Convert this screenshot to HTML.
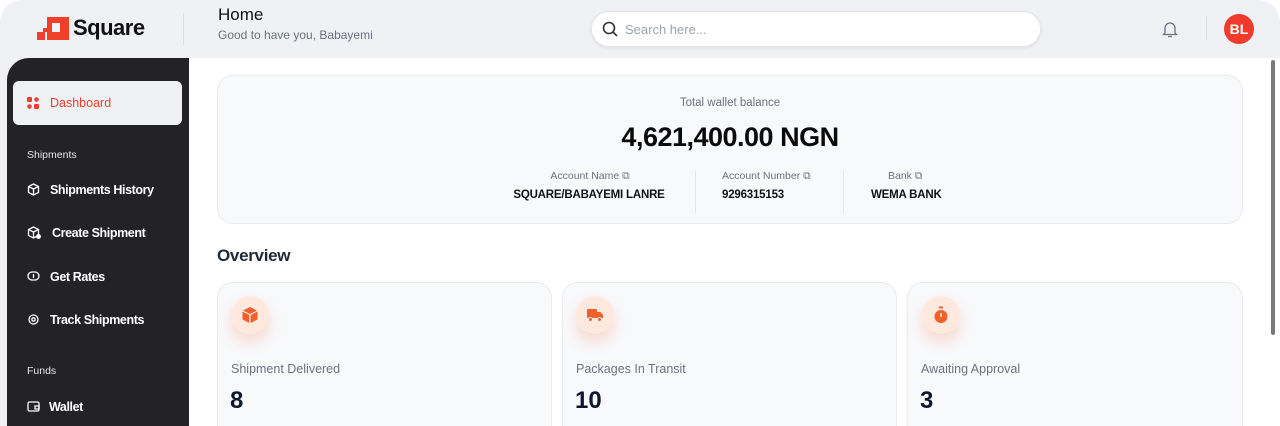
<!DOCTYPE html>
<html style="width:1280px;height:426px;overflow:hidden"><head><meta charset="utf-8"><style>
*{box-sizing:border-box;margin:0;padding:0}
body{width:1280px;height:426px;overflow:hidden;background:#fff;font-family:"Liberation Sans",sans-serif;position:relative}
.frame{position:absolute;inset:0;background:#f0f1f5;border-radius:22px 22px 0 0}
.abs{position:absolute}
.side{left:7px;top:58px;width:182px;height:368px;background:#232225;border-radius:22px 0 0 0}
.main{left:189px;top:58px;width:1079px;height:368px;background:#fff}
.sb{left:1268px;top:58px;width:12px;height:368px;background:#fff}
.sb i{position:absolute;left:3px;top:2px;width:4px;height:275px;background:#7a7a7a;border-radius:2px}
.nav{color:#fff;font-size:12.5px;font-weight:bold;letter-spacing:-.4px}
.sec{color:#e6e6e6;font-size:10.5px}
.card{background:#f8f9fb;border:1px solid #e8eaee;border-radius:16px}
.lbl{color:#6b7280;font-size:10.5px}
.val{color:#111;font-size:11.5px;font-weight:bold;letter-spacing:-.2px}
.ic{width:38px;height:38px;border-radius:50%;background:#ffe9df;box-shadow:0 8px 14px rgba(255,120,80,.25);display:flex;align-items:center;justify-content:center}
.st{color:#6b7280;font-size:12.5px}
.num{color:#0f172a;font-size:24px;font-weight:bold}
</style></head><body>
<div class="frame"></div>
<svg class="abs" style="left:37px;top:17px" width="32" height="23" viewBox="0 0 32 23"><rect x="10" y="0" width="22" height="23" fill="#f0402a"/><rect x="15" y="6" width="8" height="9" fill="#f0f1f5"/><rect x="0" y="15" width="8" height="8" fill="#f0402a"/><rect x="6" y="11" width="4" height="4" fill="#f0402a"/></svg>
<div class="abs" style="left:73px;top:15px;font-size:22px;font-weight:bold;color:#111;letter-spacing:-.5px">Square</div>
<div class="abs" style="left:183px;top:13px;width:1px;height:32px;background:#dcdee3"></div>
<div class="abs" style="left:218px;top:5px;font-size:17px;color:#111">Home</div>
<div class="abs" style="left:218px;top:28px;font-size:12px;color:#6b7280">Good to have you, Babayemi</div>
<div class="abs" style="left:591px;top:11px;width:450px;height:36px;background:#fff;border:1px solid #e2e4e8;border-radius:18px;box-shadow:0 1px 3px rgba(0,0,0,.08)"></div>
<svg class="abs" style="left:602px;top:21px" width="16" height="16" viewBox="0 0 16 16" fill="none" stroke="#333" stroke-width="1.6"><circle cx="7" cy="7" r="5.5"/><path d="M11 11l4 4"/></svg>
<div class="abs" style="left:625px;top:22px;font-size:13px;color:#9ca3af">Search here...</div>
<svg class="abs" style="left:1162px;top:20px" width="16" height="18" viewBox="0 0 16 18" fill="none" stroke="#6b7280" stroke-width="1.3"><path d="M3 13V8a5 5 0 0110 0v5l1.5 1.5h-13z"/><path d="M6 16.5h4"/></svg>
<div class="abs" style="left:1206px;top:16px;width:1px;height:24px;background:#dcdee3"></div>
<div class="abs" style="left:1224px;top:14px;width:30px;height:30px;border-radius:50%;background:#ef3b2c;color:#fff;font-weight:bold;font-size:14px;text-align:center;line-height:30px">BL</div>

<div class="abs side"></div>
<div class="abs main"></div>
<div class="abs sb"><i></i></div>

<div class="abs" style="left:13px;top:81px;width:169px;height:44px;background:#f0f1f5;border-radius:6px"></div>
<svg class="abs" style="left:27px;top:97px" width="12" height="12" viewBox="0 0 12 12" fill="#f0402a"><rect x="0" y="0" width="5" height="5" rx="1"/><circle cx="9.5" cy="2.5" r="2.3"/><circle cx="2.5" cy="9.5" r="2.3"/><rect x="7" y="7" width="5" height="5" rx="1"/></svg>
<div class="abs" style="left:50px;top:96px;font-size:12.5px;color:#f0402a">Dashboard</div>
<div class="abs sec" style="left:27px;top:149px">Shipments</div>
<svg class="abs" style="left:27px;top:183px" width="13" height="13" viewBox="0 0 13 13" fill="none" stroke="#fff" stroke-width="1.3"><path d="M6.5 1l5 2.5v6L6.5 12l-5-2.5v-6z M1.5 3.5l5 2.5 5-2.5 M6.5 6v6"/></svg>
<div class="abs nav" style="left:50px;top:183px">Shipments History</div>
<svg class="abs" style="left:27px;top:226px" width="14" height="13" viewBox="0 0 14 13" fill="none" stroke="#fff" stroke-width="1.3"><path d="M6.5 1l5 2.5v6L6.5 12l-5-2.5v-6z M1.5 3.5l5 2.5 5-2.5 M6.5 6v6"/><circle cx="11.5" cy="10.5" r="1.8" fill="#fff"/></svg>
<div class="abs nav" style="left:52px;top:226px">Create Shipment</div>
<svg class="abs" style="left:27px;top:271px" width="13" height="10" viewBox="0 0 13 10" fill="none" stroke="#fff" stroke-width="1.3"><rect x="1" y="1" width="11" height="8" rx="4"/><path d="M6.5 3v4"/></svg>
<div class="abs nav" style="left:50px;top:270px">Get Rates</div>
<svg class="abs" style="left:27px;top:313px" width="13" height="13" viewBox="0 0 13 13" fill="none" stroke="#fff" stroke-width="1.3"><circle cx="6.5" cy="6.5" r="4.5"/><circle cx="6.5" cy="6.5" r="1.7"/></svg>
<div class="abs nav" style="left:50px;top:313px">Track Shipments</div>
<div class="abs sec" style="left:27px;top:365px">Funds</div>
<svg class="abs" style="left:27px;top:401px" width="13" height="11" viewBox="0 0 13 11" fill="none" stroke="#fff" stroke-width="1.3"><rect x="1" y="1" width="11" height="9" rx="1.5"/><path d="M8 5h4v3H8z"/></svg>
<div class="abs nav" style="left:49px;top:400px">Wallet</div>

<div class="abs card" style="left:217px;top:75px;width:1026px;height:149px"></div>
<div class="abs" style="left:217px;top:97px;width:1026px;text-align:center;font-size:11.5px;color:#6b7280">Total wallet balance</div>
<div class="abs" style="left:217px;top:122px;width:1026px;text-align:center;font-size:27px;font-weight:bold;color:#0a0a0a;letter-spacing:-.5px">4,621,400.00 NGN</div>
<div class="abs lbl" style="left:505px;top:170px;width:170px;text-align:center">Account Name ⧉</div>
<div class="abs val" style="left:500px;top:189px;width:178px;text-align:center">SQUARE/BABAYEMI LANRE</div>
<div class="abs" style="left:695px;top:170px;width:1px;height:44px;background:#e5e7eb"></div>
<div class="abs lbl" style="left:722px;top:170px">Account Number ⧉</div>
<div class="abs val" style="left:722px;top:189px">9296315153</div>
<div class="abs" style="left:843px;top:170px;width:1px;height:44px;background:#e5e7eb"></div>
<div class="abs lbl" style="left:888px;top:170px">Bank ⧉</div>
<div class="abs val" style="left:871px;top:189px">WEMA BANK</div>

<div class="abs" style="left:217px;top:246px;font-size:17px;font-weight:bold;color:#1f2937;letter-spacing:-.3px">Overview</div>

<div class="abs card" style="left:217px;top:282px;width:335px;height:160px"></div>
<div class="abs card" style="left:562px;top:282px;width:335px;height:160px"></div>
<div class="abs card" style="left:907px;top:282px;width:336px;height:160px"></div>
<div class="abs ic" style="left:231px;top:296px"><svg width="18" height="18" viewBox="0 0 18 18" fill="#f0602a"><path d="M9 1l7 3.5-7 3.5-7-3.5z M1.5 5.5L8.3 9v8L1.5 13.5z M16.5 5.5L9.7 9v8l6.8-3.5z"/></svg></div>
<div class="abs ic" style="left:576px;top:296px"><svg width="18" height="16" viewBox="0 0 18 16" fill="#f0602a"><rect x="1" y="2" width="10" height="9" rx="1"/><path d="M11 5h3.5l2.5 3v3h-6z"/><circle cx="4.5" cy="12.5" r="2" stroke="#ffe9df" stroke-width="1"/><circle cx="13.5" cy="12.5" r="2" stroke="#ffe9df" stroke-width="1"/></svg></div>
<div class="abs ic" style="left:922px;top:296px"><svg width="16" height="18" viewBox="0 0 16 18" fill="#f0602a"><rect x="6" y="0.5" width="4" height="2"/><circle cx="8" cy="10.5" r="6.5"/><path d="M8 7v4" stroke="#ffe9df" stroke-width="1.6"/></svg></div>
<div class="abs st" style="left:231px;top:362px">Shipment Delivered</div>
<div class="abs st" style="left:576px;top:362px">Packages In Transit</div>
<div class="abs st" style="left:921px;top:362px">Awaiting Approval</div>
<div class="abs num" style="left:230px;top:387px">8</div>
<div class="abs num" style="left:575px;top:387px">10</div>
<div class="abs num" style="left:920px;top:387px">3</div>
</body></html>
